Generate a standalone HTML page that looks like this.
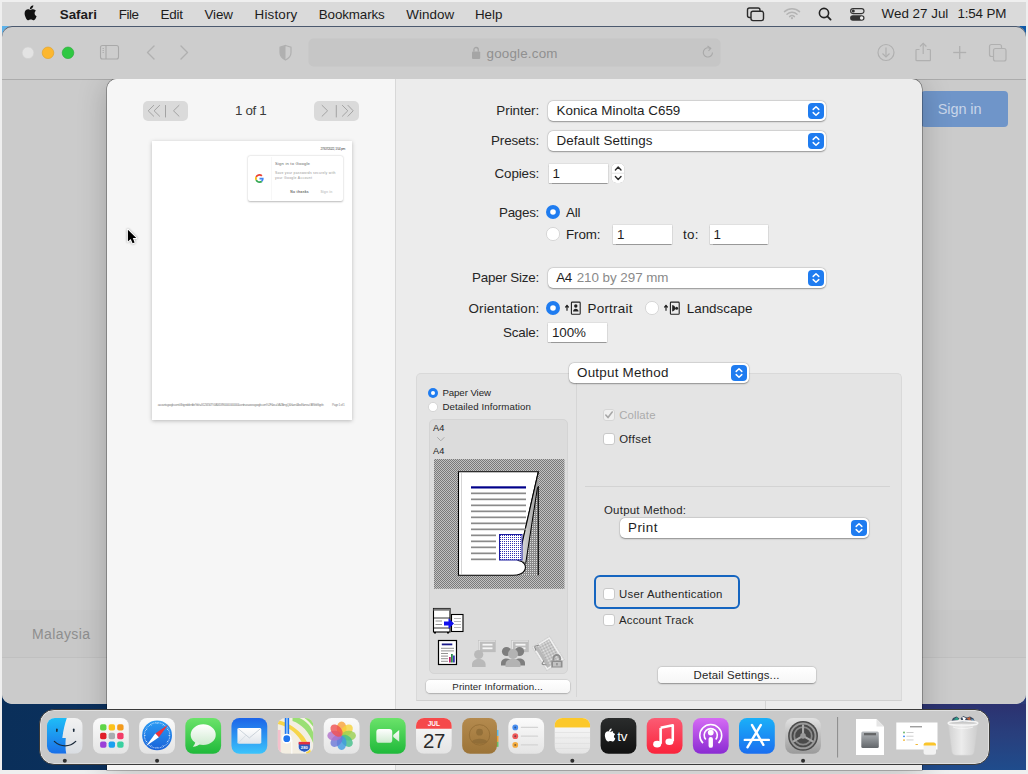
<!DOCTYPE html><html><head><meta charset="utf-8"><style>
html,body{margin:0;padding:0;width:1028px;height:774px;overflow:hidden;background:#efefef;}
body{position:relative;font-family:"Liberation Sans",sans-serif;}
.t{position:absolute;white-space:nowrap;}
.b{position:absolute;box-sizing:border-box;}
svg{position:absolute;overflow:visible;}
</style></head><body>
<div class="b" style="left:2px;top:26px;width:1024px;height:744px;background:linear-gradient(90deg,#0a2f5a 0%,#0d3566 40%,#1f3f7a 75%,#2b3b78 100%);"></div>
<div class="b" style="left:2px;top:26px;width:1024px;height:34px;background:linear-gradient(90deg,#5cb2ea 0%,#3a8fd0 40%,#1a64b0 80%,#0d58a8 100%);"></div>
<div class="b" style="left:922px;top:704px;width:104px;height:66px;background:linear-gradient(180deg,#2c3270 0%,#28407e 50%,#1f4c8c 100%);"></div>
<div class="b" style="left:2px;top:2px;width:1024px;height:24px;background:#dadada;"></div>
<svg style="left:23px;top:5px" width="15" height="16" viewBox="0 0 15 16"><path d="M10.3 0.2c0.1 1-0.3 2-0.9 2.7-0.6 0.7-1.6 1.3-2.5 1.2-0.1-1 0.4-2 0.9-2.6 0.6-0.7 1.7-1.2 2.5-1.3z M13.2 5.5c-0.1 0.1-1.6 0.9-1.6 2.8 0 2.2 1.9 3 2 3-0.1 0.3-0.4 1.2-1 2.1-0.6 0.9-1.3 1.8-2.3 1.8-1 0-1.3-0.6-2.5-0.6-1.2 0-1.5 0.6-2.4 0.6-1 0-1.7-0.9-2.3-1.8C2.2 11.9 1.6 9.7 1.6 8.3c0-2.7 1.8-4.1 3.5-4.1 0.9 0 1.7 0.6 2.3 0.6 0.5 0 1.4-0.6 2.4-0.6 0.4 0 1.8 0 2.7 1.300z" fill="#111"/></svg>
<div class="t" style="left:59.70px;top:8.00px;font-size:13.4px;line-height:13.4px;color:#1c1c1c;font-weight:700;letter-spacing:0.011px;">Safari</div>
<div class="t" style="left:118.80px;top:8.00px;font-size:13.4px;line-height:13.4px;color:#1c1c1c;letter-spacing:-0.464px;">File</div>
<div class="t" style="left:160.60px;top:8.00px;font-size:13.4px;line-height:13.4px;color:#1c1c1c;letter-spacing:-0.230px;">Edit</div>
<div class="t" style="left:204.40px;top:8.00px;font-size:13.4px;line-height:13.4px;color:#1c1c1c;letter-spacing:-0.068px;">View</div>
<div class="t" style="left:254.60px;top:8.00px;font-size:13.4px;line-height:13.4px;color:#1c1c1c;letter-spacing:0.168px;">History</div>
<div class="t" style="left:318.80px;top:8.00px;font-size:13.4px;line-height:13.4px;color:#1c1c1c;letter-spacing:-0.128px;">Bookmarks</div>
<div class="t" style="left:406.30px;top:8.00px;font-size:13.4px;line-height:13.4px;color:#1c1c1c;letter-spacing:0.068px;">Window</div>
<div class="t" style="left:475.00px;top:8.00px;font-size:13.4px;line-height:13.4px;color:#1c1c1c;letter-spacing:-0.053px;">Help</div>
<div class="t" style="left:881.60px;top:7.00px;font-size:13.4px;line-height:13.4px;color:#1c1c1c;letter-spacing:0.001px;">Wed 27 Jul</div>
<div class="t" style="left:957.40px;top:7.00px;font-size:13.4px;line-height:13.4px;color:#1c1c1c;letter-spacing:-0.151px;">1:54 PM</div>
<div class="b" style="left:2px;top:26px;width:1024px;height:678px;background:#cbcbcb;border-radius:10px;overflow:hidden;"></div>
<div class="b" style="left:2px;top:26px;width:1024px;height:54px;background:#cdcdcd;border-radius:10px 10px 0 0;border-bottom:1px solid #acacac;box-shadow:inset 0 1px 0 rgba(20,40,70,0.7);"></div>
<div class="b" style="left:2px;top:610px;width:1024px;height:48px;background:#c8c8c8;border-bottom:1px solid #c0c0c0;"></div>
<div class="b" style="left:2px;top:658px;width:1024px;height:46px;background:#cbcbcb;border-radius:0 0 10px 10px;"></div>
<div class="t" style="left:32.00px;top:627.00px;font-size:14px;line-height:14px;color:#8e8e8e;letter-spacing:0.394px;">Malaysia</div>
<div class="b" style="left:921px;top:91px;width:87px;height:36px;background:#6f95c9;border-radius:4px;"></div>
<div class="t" style="left:937.70px;top:102.00px;font-size:14.5px;line-height:14.5px;color:#c9d6ea;letter-spacing:-0.073px;">Sign in</div>
<div class="b" style="left:107px;top:79px;width:815px;height:691px;background:#ececec;border-radius:10px 10px 0 0;box-shadow:0 0 0 0.6px rgba(0,0,0,0.45),0 4px 30px rgba(0,0,0,0.22);clip-path:inset(0 -60px -60px -60px);"></div>
<div class="b" style="left:107px;top:79px;width:289px;height:691px;background:#f6f6f6;border-radius:10px 0 0 0;border-right:1px solid #d8d8d8;"></div>
<svg style="left:0;top:0" width="1028" height="80"><circle cx="28" cy="52.8" r="5.8" fill="#e3e3e3" stroke="#d2d2d2" stroke-width="0.6"/><circle cx="48" cy="52.8" r="5.8" fill="#fcb72f" stroke="#e0a020" stroke-width="0.6"/><circle cx="68" cy="52.8" r="5.8" fill="#2fc842" stroke="#22a832" stroke-width="0.6"/><rect x="100.5" y="45.5" width="18" height="13.5" rx="2" fill="none" stroke="#a9a9a9" stroke-width="1.1"/><line x1="106" y1="45.5" x2="106" y2="59" stroke="#a9a9a9" stroke-width="1.1"/><line x1="102.5" y1="48.5" x2="104" y2="48.5" stroke="#a9a9a9" stroke-width="0.8"/><line x1="102.5" y1="50.5" x2="104" y2="50.5" stroke="#a9a9a9" stroke-width="0.8"/><line x1="102.5" y1="52.5" x2="104" y2="52.5" stroke="#a9a9a9" stroke-width="0.8"/><polyline points="154,46 147.5,52.5 154,59" fill="none" stroke="#b0b0b0" stroke-width="1.4" stroke-linecap="round" stroke-linejoin="round"/><polyline points="181,46 187.5,52.5 181,59" fill="none" stroke="#b0b0b0" stroke-width="1.4" stroke-linecap="round" stroke-linejoin="round"/><path d="M285.5 45.5 L291 47.3 L291 52.5 C291 56 288.5 58.5 285.5 60 C282.5 58.5 280 56 280 52.5 L280 47.3 Z" fill="none" stroke="#b0b0b0" stroke-width="1.2"/><path d="M285.5 45.5 L285.5 60 C282.5 58.5 280 56 280 52.5 L280 47.3 Z" fill="#b0b0b0"/><rect x="308.5" y="38.5" width="412" height="28" rx="5" fill="#c6c6c6"/><rect x="472" y="51.5" width="8.2" height="7.5" rx="1" fill="#a5a5a5"/><path d="M473.9 51.5 v-1.8 a2.2 2.2 0 0 1 4.4 0 v1.8" fill="none" stroke="#a5a5a5" stroke-width="1.3"/><path d="M712.5 52.5 a4.6 4.6 0 1 1 -2.2 -4" fill="none" stroke="#a9a9a9" stroke-width="1.1"/><polyline points="707.5,46 710.8,48.3 708.5,51" fill="none" stroke="#a9a9a9" stroke-width="1.1"/><circle cx="886" cy="52.5" r="8" fill="none" stroke="#b0b0b0" stroke-width="1.2"/><line x1="886" y1="47.5" x2="886" y2="57" stroke="#b0b0b0" stroke-width="1.2"/><polyline points="882.5,53.5 886,57 889.5,53.5" fill="none" stroke="#b0b0b0" stroke-width="1.2"/><path d="M919.5 49.5 h-2.7 a0.8 0.8 0 0 0 -0.8 0.8 v9.6 a0.8 0.8 0 0 0 0.8 0.8 h12.8 a0.8 0.8 0 0 0 0.8 -0.8 v-9.6 a0.8 0.8 0 0 0 -0.8 -0.8 h-2.7" fill="none" stroke="#b0b0b0" stroke-width="1.2"/><line x1="923.2" y1="43.5" x2="923.2" y2="54" stroke="#b0b0b0" stroke-width="1.2"/><polyline points="920,46.5 923.2,43.3 926.4,46.5" fill="none" stroke="#b0b0b0" stroke-width="1.2"/><line x1="953.2" y1="52.5" x2="966.2" y2="52.5" stroke="#b0b0b0" stroke-width="1.3"/><line x1="959.7" y1="46" x2="959.7" y2="59" stroke="#b0b0b0" stroke-width="1.3"/><rect x="989.5" y="44.5" width="12" height="12" rx="2" fill="none" stroke="#b0b0b0" stroke-width="1.2"/><rect x="993.5" y="48.5" width="12.5" height="12.5" rx="2" fill="#cbcbcb" stroke="#b0b0b0" stroke-width="1.2"/></svg>
<div class="t" style="left:486.50px;top:47.00px;font-size:13.4px;line-height:13.4px;color:#909090;letter-spacing:0.191px;">google.com</div>
<div class="b" style="left:143.4px;top:101px;width:44.29999999999998px;height:20px;background:#dadada;border-radius:5px;"></div>
<div class="b" style="left:314.3px;top:101px;width:44.5px;height:20px;background:#dadada;border-radius:5px;"></div>
<svg style="left:0;top:0" width="400" height="130"><g fill="none" stroke="#a0a0a0" stroke-width="0.95" stroke-linecap="round" stroke-linejoin="miter"><polyline points="153.7,105.4 148.2,110.8 153.7,116.2"/><polyline points="159.6,105.4 154.1,110.8 159.6,116.2"/><line x1="165.5" y1="105.5" x2="165.5" y2="117"/><polyline points="179,105.4 173.5,110.8 179,116.2"/><polyline points="322.1,105.4 327.6,110.8 322.1,116.2"/><line x1="336.3" y1="105.5" x2="336.3" y2="117"/><polyline points="342.4,105.4 347.8,110.8 342.4,116.2"/><polyline points="348,105.4 353.2,110.8 348,116.2"/></g></svg>
<div class="t" style="left:235.00px;top:104.00px;font-size:13.4px;line-height:13.4px;color:#3a3a3a;letter-spacing:-0.365px;">1 of 1</div>
<div class="b" style="left:152px;top:141px;width:200px;height:279px;background:#ffffff;box-shadow:0 1px 4px rgba(0,0,0,0.25);"></div>
<div class="t" style="left:320.60px;top:148.00px;font-size:3.4px;line-height:3.4px;color:#444;letter-spacing:-0.355px;">27/07/2022, 1:54 pm</div>
<div class="b" style="left:248px;top:156px;width:95px;height:45px;background:#fff;border-radius:2px;box-shadow:0 0.5px 2px rgba(0,0,0,0.28);"></div>
<div class="b" style="left:271px;top:157px;width:1px;height:43px;background:#f7f7f7;"></div>
<svg style="left:255px;top:173.5px" width="9" height="9" viewBox="0 0 48 48"><path fill="#EA4335" d="M24 9.5c3.5 0 6.6 1.2 9.1 3.6l6.8-6.8C35.8 2.4 30.3 0 24 0 14.6 0 6.6 5.4 2.6 13.3l7.9 6.1C12.4 13.7 17.7 9.5 24 9.5z"/><path fill="#4285F4" d="M46.1 24.5c0-1.6-.1-3.1-.4-4.5H24v9h12.4c-.5 2.9-2.2 5.3-4.6 6.9l7.5 5.8c4.4-4 6.8-10 6.800-17.200z"/><path fill="#FBBC05" d="M10.5 28.6c-.5-1.4-.8-3-.8-4.6s.3-3.2.8-4.6l-7.9-6.1C1 16.500 0 20.100 0 24s1 7.500 2.600 10.700l7.900-6.100z"/><path fill="#34A853" d="M24 48c6.5 0 11.900-2.100 15.900-5.800l-7.500-5.800c-2.100 1.400-4.800 2.300-8.400 2.300-6.300 0-11.600-4.200-13.500-10l-7.900 6.100C6.600 42.600 14.600 48 24 48z"/></svg>
<div class="t" style="left:275.00px;top:162.00px;font-size:4.2px;line-height:4.2px;color:#6a6a6a;letter-spacing:0.174px;">Sign in to Google</div>
<div class="t" style="left:275.00px;top:172.00px;font-size:3.4px;line-height:3.4px;color:#999;letter-spacing:0.234px;">Save your passwords securely with</div>
<div class="t" style="left:275.00px;top:177.00px;font-size:3.4px;line-height:3.4px;color:#999;letter-spacing:0.302px;">your Google Account</div>
<div class="t" style="left:290.30px;top:191.00px;font-size:3.4px;line-height:3.4px;color:#6a6a6a;font-weight:700;letter-spacing:0.258px;">No thanks</div>
<div class="t" style="left:320.40px;top:191.00px;font-size:3.4px;line-height:3.4px;color:#c8c8c8;font-weight:700;letter-spacing:0.111px;">Sign in</div>
<div class="t" style="left:157.70px;top:404.00px;font-size:3.2px;line-height:3.2px;color:#8a8a8a;letter-spacing:-0.486px;">accounts.google.com/v3/signin/identifier?dsh=S1234567%3A1658900000000000&amp;continue=www.google.com%2F&amp;ec=GAZAmgQ&amp;hl=en&amp;flowName=GlifWebSignIn</div>
<div class="t" style="left:332.00px;top:404.00px;font-size:3.2px;line-height:3.2px;color:#8a8a8a;letter-spacing:-0.357px;">Page 1 of 1</div>
<div class="t" style="left:496.30px;top:104.00px;font-size:13.4px;line-height:13.4px;color:#262626;letter-spacing:-0.027px;">Printer:</div>
<div class="b" style="left:548px;top:101px;width:278px;height:20px;background:#fff;border-radius:5px;box-shadow:0 0.5px 1.5px rgba(0,0,0,0.35),0 0 0 0.5px rgba(0,0,0,0.08);"></div>
<svg style="left:808px;top:103.0px" width="16" height="16" viewBox="0 0 16 16"><rect x="0" y="0" width="16" height="16" rx="4" fill="#1f7cf0"/><polyline points="5.2,6.4 8,3.8 10.8,6.4" fill="none" stroke="#fff" stroke-width="1.5" stroke-linecap="round" stroke-linejoin="round"/><polyline points="5.2,9.6 8,12.2 10.8,9.6" fill="none" stroke="#fff" stroke-width="1.5" stroke-linecap="round" stroke-linejoin="round"/></svg>
<div class="t" style="left:556.50px;top:104.00px;font-size:13.4px;line-height:13.4px;color:#1e1e1e;letter-spacing:0.014px;">Konica Minolta C659</div>
<div class="t" style="left:491.00px;top:134.00px;font-size:13.4px;line-height:13.4px;color:#262626;letter-spacing:-0.122px;">Presets:</div>
<div class="b" style="left:548px;top:131px;width:278px;height:20px;background:#fff;border-radius:5px;box-shadow:0 0.5px 1.5px rgba(0,0,0,0.35),0 0 0 0.5px rgba(0,0,0,0.08);"></div>
<svg style="left:808px;top:133.0px" width="16" height="16" viewBox="0 0 16 16"><rect x="0" y="0" width="16" height="16" rx="4" fill="#1f7cf0"/><polyline points="5.2,6.4 8,3.8 10.8,6.4" fill="none" stroke="#fff" stroke-width="1.5" stroke-linecap="round" stroke-linejoin="round"/><polyline points="5.2,9.6 8,12.2 10.8,9.6" fill="none" stroke="#fff" stroke-width="1.5" stroke-linecap="round" stroke-linejoin="round"/></svg>
<div class="t" style="left:556.50px;top:134.00px;font-size:13.4px;line-height:13.4px;color:#1e1e1e;letter-spacing:0.093px;">Default Settings</div>
<div class="t" style="left:494.50px;top:167.00px;font-size:13.4px;line-height:13.4px;color:#262626;letter-spacing:-0.106px;">Copies:</div>
<div class="b" style="left:548.5px;top:163.5px;width:59.0px;height:19.5px;background:#fff;box-shadow:0 0.6px 1px rgba(0,0,0,0.32),0 0 0 0.5px rgba(0,0,0,0.10);"></div>
<div class="t" style="left:552.50px;top:167.00px;font-size:13.4px;line-height:13.4px;color:#1e1e1e;">1</div>
<svg style="left:610.5px;top:163px" width="14" height="21" viewBox="0 0 14 21"><rect x="0.5" y="0.5" width="13" height="19.5" rx="5" fill="#fff" style="filter:drop-shadow(0 0.5px 0.6px rgba(0,0,0,0.35))"/><line x1="1" y1="10.2" x2="13" y2="10.2" stroke="#e4e4e4" stroke-width="1"/><polyline points="4.4,6.9 7.2,4.1 10,6.9" fill="none" stroke="#2a2a2a" stroke-width="1.4" stroke-linecap="round" stroke-linejoin="round"/><polyline points="4.4,13.6 7.2,16.4 10,13.6" fill="none" stroke="#2a2a2a" stroke-width="1.4" stroke-linecap="round" stroke-linejoin="round"/></svg>
<div class="t" style="left:499.00px;top:206.00px;font-size:13.4px;line-height:13.4px;color:#262626;letter-spacing:-0.284px;">Pages:</div>
<svg style="left:545.6px;top:205.0px" width="14" height="14"><circle cx="7.0" cy="7.0" r="7.0" fill="#1f7cf0"/><circle cx="7.0" cy="7.0" r="2.8000000000000003" fill="#fff"/></svg>
<div class="t" style="left:566.00px;top:206.00px;font-size:13.4px;line-height:13.4px;color:#1e1e1e;letter-spacing:-0.196px;">All</div>
<svg style="left:545.6px;top:227.0px" width="14" height="14"><circle cx="7.0" cy="7.0" r="6.6" fill="#fff" stroke="#cfcfcf" stroke-width="0.8"/></svg>
<div class="t" style="left:566.00px;top:228.00px;font-size:13.4px;line-height:13.4px;color:#1e1e1e;letter-spacing:-0.122px;">From:</div>
<div class="b" style="left:613.3px;top:224.6px;width:59.200000000000045px;height:19.200000000000017px;background:#fff;box-shadow:0 0.6px 1px rgba(0,0,0,0.32),0 0 0 0.5px rgba(0,0,0,0.10);"></div>
<div class="t" style="left:617.00px;top:228.00px;font-size:13.4px;line-height:13.4px;color:#1e1e1e;">1</div>
<div class="t" style="left:683.00px;top:228.00px;font-size:13.4px;line-height:13.4px;color:#1e1e1e;letter-spacing:0.301px;">to:</div>
<div class="b" style="left:709.5px;top:224.6px;width:58.89999999999998px;height:19.200000000000017px;background:#fff;box-shadow:0 0.6px 1px rgba(0,0,0,0.32),0 0 0 0.5px rgba(0,0,0,0.10);"></div>
<div class="t" style="left:713.50px;top:228.00px;font-size:13.4px;line-height:13.4px;color:#1e1e1e;">1</div>
<div class="t" style="left:472.00px;top:271.00px;font-size:13.4px;line-height:13.4px;color:#262626;letter-spacing:-0.197px;">Paper Size:</div>
<div class="b" style="left:548px;top:268px;width:278px;height:20px;background:#fff;border-radius:5px;box-shadow:0 0.5px 1.5px rgba(0,0,0,0.35),0 0 0 0.5px rgba(0,0,0,0.08);"></div>
<svg style="left:808px;top:270.0px" width="16" height="16" viewBox="0 0 16 16"><rect x="0" y="0" width="16" height="16" rx="4" fill="#1f7cf0"/><polyline points="5.2,6.4 8,3.8 10.8,6.4" fill="none" stroke="#fff" stroke-width="1.5" stroke-linecap="round" stroke-linejoin="round"/><polyline points="5.2,9.6 8,12.2 10.8,9.6" fill="none" stroke="#fff" stroke-width="1.5" stroke-linecap="round" stroke-linejoin="round"/></svg>
<div class="t" style="left:556.30px;top:271.00px;font-size:13.4px;line-height:13.4px;color:#1e1e1e;letter-spacing:-0.391px;">A4</div>
<div class="t" style="left:576.70px;top:271.00px;font-size:13.4px;line-height:13.4px;color:#8a8a8a;letter-spacing:-0.039px;">210 by 297 mm</div>
<div class="t" style="left:468.50px;top:302.00px;font-size:13.4px;line-height:13.4px;color:#262626;letter-spacing:0.139px;">Orientation:</div>
<svg style="left:545.8px;top:301.0px" width="14" height="14"><circle cx="7.0" cy="7.0" r="7.0" fill="#1f7cf0"/><circle cx="7.0" cy="7.0" r="2.8000000000000003" fill="#fff"/></svg>
<svg style="left:644.7px;top:301.0px" width="14" height="14"><circle cx="7.0" cy="7.0" r="6.6" fill="#fff" stroke="#cfcfcf" stroke-width="0.8"/></svg>
<div class="t" style="left:587.50px;top:302.00px;font-size:13.4px;line-height:13.4px;color:#1e1e1e;letter-spacing:0.258px;">Portrait</div>
<div class="t" style="left:686.70px;top:302.00px;font-size:13.4px;line-height:13.4px;color:#1e1e1e;letter-spacing:0.029px;">Landscape</div>
<div class="t" style="left:503.00px;top:326.00px;font-size:13.4px;line-height:13.4px;color:#262626;letter-spacing:-0.189px;">Scale:</div>
<div class="b" style="left:548.4px;top:322.7px;width:59.0px;height:19.600000000000023px;background:#fff;box-shadow:0 0.6px 1px rgba(0,0,0,0.32),0 0 0 0.5px rgba(0,0,0,0.10);"></div>
<div class="t" style="left:552.00px;top:326.00px;font-size:13.4px;line-height:13.4px;color:#1e1e1e;letter-spacing:-0.091px;">100%</div>
<svg style="left:0;top:0" width="700" height="330"><g stroke="#222" fill="none"><line x1="567" y1="310.8" x2="567" y2="305.6" stroke-width="1.2"/><polyline points="565.3,307.3 567,305.4 568.7,307.3" stroke-width="1.1" fill="#222"/><rect x="571.4" y="302.1" width="8.8" height="12.1" rx="0.8" stroke-width="1.1"/><circle cx="575.8" cy="306" r="1.7" fill="#222" stroke="none"/><path d="M573 311.6 c0.3-2 1.3-2.8 2.8-2.8 s2.5 0.8 2.8 2.8 z" fill="#222" stroke="none"/><line x1="666" y1="310.8" x2="666" y2="305.6" stroke-width="1.2"/><polyline points="664.3,307.3 666,305.4 667.7,307.3" stroke-width="1.1" fill="#222"/><rect x="670.4" y="302.1" width="8.8" height="12.1" rx="0.8" stroke-width="1.1"/><circle cx="676.6" cy="308.2" r="1.5" fill="#222" stroke="none"/><path d="M672.2 305 c2.1 0.3 2.900 1.500 2.900 3.200 s-0.800 2.900-2.900 3.200 z" fill="#222" stroke="none"/></g></svg>
<div class="b" style="left:416px;top:373px;width:486px;height:327.79999999999995px;background:#e4e4e4;border:1px solid #d9d9d9;border-bottom-color:#d0d0d0;border-radius:5px 5px 0 0;"></div>
<div class="b" style="left:576px;top:383px;width:1px;height:314px;background:#d6d6d6;"></div>
<div class="b" style="left:764.5px;top:701px;width:1.0px;height:9px;background:#d4d4d4;"></div>
<div class="b" style="left:568.5px;top:362.5px;width:180.20000000000005px;height:20.5px;background:#fff;border-radius:5px;box-shadow:0 0.5px 1.5px rgba(0,0,0,0.35),0 0 0 0.5px rgba(0,0,0,0.08);"></div>
<svg style="left:730.7px;top:364.75px" width="16" height="16" viewBox="0 0 16 16"><rect x="0" y="0" width="16" height="16" rx="4" fill="#1f7cf0"/><polyline points="5.2,6.4 8,3.8 10.8,6.4" fill="none" stroke="#fff" stroke-width="1.5" stroke-linecap="round" stroke-linejoin="round"/><polyline points="5.2,9.6 8,12.2 10.8,9.6" fill="none" stroke="#fff" stroke-width="1.5" stroke-linecap="round" stroke-linejoin="round"/></svg>
<div class="t" style="left:577.00px;top:366.00px;font-size:13.4px;line-height:13.4px;color:#1e1e1e;letter-spacing:0.238px;">Output Method</div>
<svg style="left:427.8px;top:387.7px" width="10" height="10"><circle cx="5.0" cy="5.0" r="5.0" fill="#1f7cf0"/><circle cx="5.0" cy="5.0" r="2.0" fill="#fff"/></svg>
<div class="t" style="left:442.40px;top:388.00px;font-size:9.7px;line-height:9.7px;color:#262626;letter-spacing:-0.092px;">Paper View</div>
<svg style="left:427.8px;top:402.0px" width="10" height="10"><circle cx="5.0" cy="5.0" r="4.6" fill="#fff" stroke="#cfcfcf" stroke-width="0.8"/></svg>
<div class="t" style="left:442.40px;top:402.00px;font-size:9.7px;line-height:9.7px;color:#262626;letter-spacing:0.094px;">Detailed Information</div>
<div class="b" style="left:428.5px;top:419px;width:139.5px;height:255px;background:#dcdcdc;border-radius:5px;border:1px solid #d4d4d4;"></div>
<div class="t" style="left:433.00px;top:424.00px;font-size:9.2px;line-height:9.2px;color:#222;letter-spacing:0.147px;">A4</div>
<svg style="left:434px;top:436px" width="12" height="6"><polyline points="3.3,1.3 6.8,4.8 10.3,1.3" fill="none" stroke="#a9a9a9" stroke-width="1"/></svg>
<div class="t" style="left:433.00px;top:447.00px;font-size:9.2px;line-height:9.2px;color:#222;letter-spacing:0.147px;">A4</div>
<svg style="left:0;top:0" width="600" height="600"><defs><pattern id="hatch" x="434" y="459" width="2" height="2" patternUnits="userSpaceOnUse"><rect width="2" height="2" fill="#7a7a7a"/><rect x="0" y="0" width="1" height="1" fill="#c2c2c2"/><rect x="1" y="1" width="1" height="1" fill="#c2c2c2"/></pattern><pattern id="dots" x="499" y="534" width="2" height="2" patternUnits="userSpaceOnUse"><rect width="2" height="2" fill="#fff"/><rect x="1" y="1" width="1" height="1" fill="#3030b0"/></pattern><pattern id="dots2" width="2" height="2" patternUnits="userSpaceOnUse"><rect width="2" height="2" fill="#8a8a8a"/><rect x="0" y="0" width="1" height="1" fill="#dadada"/></pattern><linearGradient id="curl" x1="0" y1="0" x2="1" y2="0"><stop offset="0" stop-color="#e6e6e6"/><stop offset="1" stop-color="#9a9a9a"/></linearGradient></defs><rect x="434" y="459" width="130.5" height="129.8" fill="url(#hatch)"/><path d="M537.5 480 L538.3 480 L538.3 575.2 L520 575.2 L525.7 563 Z" fill="url(#dots2)"/><line x1="538.3" y1="486" x2="538.3" y2="575.2" stroke="#000" stroke-width="1.1"/><path d="M458.5 471.8 L538.3 471.8 L518.2 560.5 C524 561 527 566 524.5 570.5 C522.5 574 519 575.2 513 575.2 L458.5 575.2 Z" fill="#fff" stroke="#000" stroke-width="1.1"/><line x1="461.5" y1="473.5" x2="461.5" y2="574" stroke="#a0a0a0" stroke-width="0.9" stroke-dasharray="1 1"/><path d="M538.3 471.8 L537.5 487.3 L525.7 563 C524 561 521 560.5 518.2 560.5 Z" fill="url(#curl)"/><line x1="538.3" y1="471.8" x2="518.2" y2="560.5" stroke="#000" stroke-width="1.1"/><line x1="537.5" y1="487.3" x2="525.7" y2="563.5" stroke="#000" stroke-width="1"/><rect x="471" y="486.3" width="55" height="2.2" fill="#00008a"/><rect x="471" y="492.5" width="55" height="1.7" fill="#8a8a8a"/><rect x="471" y="498.5" width="55" height="1.7" fill="#8a8a8a"/><rect x="471" y="504.5" width="55" height="1.7" fill="#8a8a8a"/><rect x="471" y="510.5" width="55" height="1.7" fill="#8a8a8a"/><rect x="471" y="516.5" width="55" height="1.7" fill="#8a8a8a"/><rect x="471" y="522.5" width="55" height="1.7" fill="#8a8a8a"/><rect x="471" y="528.5" width="55" height="1.7" fill="#8a8a8a"/><rect x="471" y="534.5" width="25" height="1.7" fill="#8a8a8a"/><rect x="471" y="540.5" width="25" height="1.7" fill="#8a8a8a"/><rect x="471" y="546.5" width="25" height="1.7" fill="#8a8a8a"/><rect x="471" y="552.5" width="25" height="1.7" fill="#8a8a8a"/><rect x="471" y="558.5" width="25" height="1.7" fill="#8a8a8a"/><rect x="499.5" y="534.5" width="22.5" height="25.5" fill="url(#dots)" stroke="#1a1aa0" stroke-width="1"/></svg>
<svg style="left:0;top:0" width="600" height="700"><rect x="433.5" y="608.5" width="16.5" height="23.5" fill="#fff" stroke="#000" stroke-width="1.1"/><rect x="433.5" y="608.5" width="16.5" height="2.2" fill="#7a7a7a"/><line x1="433.5" y1="618" x2="450" y2="618" stroke="#000" stroke-width="0.8"/><line x1="435.5" y1="621" x2="442" y2="621" stroke="#777" stroke-width="0.8"/><line x1="435.5" y1="624.5" x2="442" y2="624.5" stroke="#777" stroke-width="0.8"/><line x1="433.5" y1="628" x2="450" y2="628" stroke="#000" stroke-width="0.8"/><rect x="434" y="632" width="2" height="1.5" fill="#000"/><rect x="447" y="632" width="2" height="1.5" fill="#000"/><rect x="451.5" y="614.5" width="11.5" height="17" fill="#fff" stroke="#000" stroke-width="1.1"/><line x1="454" y1="618.5" x2="461" y2="618.5" stroke="#999" stroke-width="0.7"/><line x1="454" y1="621.5" x2="461" y2="621.5" stroke="#999" stroke-width="0.7"/><line x1="454" y1="624.5" x2="461" y2="624.5" stroke="#999" stroke-width="0.7"/><line x1="454" y1="627.5" x2="461" y2="627.5" stroke="#999" stroke-width="0.7"/><path d="M444 621.5 h4.5 v-3.2 l5.5 5.2 -5.5 5.2 v-3.2 h-4.5 z" fill="#1010ee"/><rect x="438.5" y="640.5" width="18" height="24" fill="#fff" stroke="#000" stroke-width="1.2"/><rect x="441.8" y="643.5" width="10.5" height="1.8" fill="#1a1a8a"/><line x1="441" y1="648.3" x2="454" y2="648.3" stroke="#777" stroke-width="0.8"/><line x1="441" y1="650.9" x2="454" y2="650.9" stroke="#777" stroke-width="0.8"/><line x1="441" y1="653.5" x2="448" y2="653.5" stroke="#777" stroke-width="0.8"/><line x1="441" y1="656.0999999999999" x2="448" y2="656.0999999999999" stroke="#777" stroke-width="0.8"/><line x1="441" y1="658.6999999999999" x2="448" y2="658.6999999999999" stroke="#777" stroke-width="0.8"/><line x1="441" y1="661.3" x2="448" y2="661.3" stroke="#777" stroke-width="0.8"/><rect x="449" y="657" width="1.8" height="5.5" fill="#c0246a"/><rect x="451" y="654" width="1.8" height="8.5" fill="#2a8a4a"/><rect x="453" y="655.5" width="1.8" height="7" fill="#3a3ab8"/><rect x="478.2" y="640.1" width="17.5" height="12" fill="#bdbdbd"/><path d="M479.2 651 V641.1 H495" fill="none" stroke="#f4f4f4" stroke-width="0.9"/><rect x="482.5" y="643.8" width="10" height="1.8" fill="#f6f6f6"/><rect x="482.5" y="647.4" width="10" height="1.8" fill="#f6f6f6"/><circle cx="478.7" cy="654.5" r="4.6" fill="#b9b9b9"/><path d="M472 667 v-2.5 c0-3.5 3-5.5 6.8-5.5 s6.800 2 6.800 5.500 v2.500 z" fill="#b9b9b9"/><rect x="511.3" y="640.1" width="17.5" height="12" fill="#bdbdbd"/><path d="M512.3 651 V641.1 H528" fill="none" stroke="#f4f4f4" stroke-width="0.9"/><rect x="515.5" y="643.8" width="10" height="1.8" fill="#f6f6f6"/><rect x="515.5" y="647.4" width="10" height="1.8" fill="#f6f6f6"/><circle cx="506.5" cy="651.5" r="4.6" fill="#7e7e7e"/><circle cx="519.5" cy="651.5" r="4.6" fill="#7e7e7e"/><path d="M501 665.5 v-2 c0-3.2 2.5-5 5.5-5 s5.5 1.8 5.5 5 v2 z" fill="#7e7e7e"/><path d="M514 665.5 v-2 c0-3.2 2.5-5 5.5-5 s5.5 1.8 5.5 5 v2 z" fill="#7e7e7e"/><circle cx="513" cy="654" r="5" fill="#b3b3b3"/><path d="M505.5 667 v-2.5 c0-3.5 3.2-5.5 7.5-5.5 s7.500 2 7.500 5.500 v2.500 z" fill="#b3b3b3"/><defs><pattern id="chk" width="2" height="2" patternUnits="userSpaceOnUse"><rect width="2" height="2" fill="#e6e6e6"/><rect width="1" height="1" fill="#a8a8a8"/><rect x="1" y="1" width="1" height="1" fill="#a8a8a8"/></pattern></defs><g transform="rotate(-32 548 653)"><rect x="539" y="641" width="18" height="25" fill="url(#chk)" stroke="#f2f2f2" stroke-width="1.3"/><rect x="540" y="642" width="3" height="23" fill="#b8b8b8"/><rect x="537.5" y="639.5" width="21" height="28" fill="none" stroke="#c4c4c4" stroke-width="0.6" stroke-dasharray="1 1"/></g><path d="M534.5 646.5 l4.5 -1.5 M534.5 646.5 l1.6 4.2" stroke="#8a8a8a" stroke-width="1.1" fill="none"/><path d="M546.5 665 l-4.6 -0.8 M541.9 664.2 l2 -3.800" stroke="#8a8a8a" stroke-width="1.1" fill="none"/><path d="M553.5 660.5 v-2.200 a3.300 3.300 0 0 1 6.600 0 v2.200" fill="none" stroke="#8e8e8e" stroke-width="1.8"/><rect x="551.3" y="660.5" width="11.2" height="7" fill="#8e8e8e"/><rect x="553" y="662" width="7.8" height="4.500" fill="#c2c2c2"/><rect x="556.2" y="663" width="1.500" height="2.400" fill="#8e8e8e"/></svg>
<div class="b" style="left:426px;top:680.2px;width:144.39999999999998px;height:13.0px;background:linear-gradient(#ffffff,#f6f6f6);border-radius:4px;box-shadow:0 0.5px 1.5px rgba(0,0,0,0.35),0 0 0 0.5px rgba(0,0,0,0.08);"></div>
<div class="t" style="left:452.30px;top:682.00px;font-size:9.7px;line-height:9.7px;color:#262626;letter-spacing:0.125px;">Printer Information...</div>
<svg style="left:603px;top:408.7px" width="12" height="12"><rect x="0.5" y="0.5" width="11" height="11" rx="2.5" fill="#f0f0f0" stroke="#d4d4d4" stroke-width="0.9"/><polyline points="2.8,6 5,8.6 9.2,3" fill="none" stroke="#a8a8a8" stroke-width="1.6" stroke-linecap="round" stroke-linejoin="round"/></svg>
<div class="t" style="left:619.20px;top:410.00px;font-size:11.4px;line-height:11.4px;color:#ababab;letter-spacing:0.136px;">Collate</div>
<svg style="left:603px;top:433px" width="12" height="12"><rect x="0.5" y="0.5" width="11" height="11" rx="2.5" fill="#fff" stroke="#c4c4c4" stroke-width="0.9"/></svg>
<div class="t" style="left:619.20px;top:434.00px;font-size:11.4px;line-height:11.4px;color:#262626;letter-spacing:0.319px;">Offset</div>
<div class="b" style="left:585px;top:486px;width:305px;height:1px;background:#d3d3d3;"></div>
<div class="t" style="left:604.00px;top:505.00px;font-size:11.4px;line-height:11.4px;color:#262626;letter-spacing:0.263px;">Output Method:</div>
<div class="b" style="left:619.5px;top:518px;width:249.5px;height:20px;background:#fff;border-radius:5px;box-shadow:0 0.5px 1.5px rgba(0,0,0,0.35),0 0 0 0.5px rgba(0,0,0,0.08);"></div>
<svg style="left:851px;top:520.0px" width="16" height="16" viewBox="0 0 16 16"><rect x="0" y="0" width="16" height="16" rx="4" fill="#1f7cf0"/><polyline points="5.2,6.4 8,3.8 10.8,6.4" fill="none" stroke="#fff" stroke-width="1.5" stroke-linecap="round" stroke-linejoin="round"/><polyline points="5.2,9.6 8,12.2 10.8,9.6" fill="none" stroke="#fff" stroke-width="1.5" stroke-linecap="round" stroke-linejoin="round"/></svg>
<div class="t" style="left:628.00px;top:521.00px;font-size:13.4px;line-height:13.4px;color:#1e1e1e;letter-spacing:0.487px;">Print</div>
<div class="b" style="left:594.2px;top:575.4px;width:145.5px;height:34.0px;border:2px solid #1565c0;border-radius:6px;"></div>
<svg style="left:603px;top:588.3px" width="12" height="12"><rect x="0.5" y="0.5" width="11" height="11" rx="2.5" fill="#fff" stroke="#c4c4c4" stroke-width="0.9"/></svg>
<div class="t" style="left:619.00px;top:589.00px;font-size:11.4px;line-height:11.4px;color:#262626;letter-spacing:0.258px;">User Authentication</div>
<svg style="left:603px;top:614.4px" width="12" height="12"><rect x="0.5" y="0.5" width="11" height="11" rx="2.5" fill="#fff" stroke="#c4c4c4" stroke-width="0.9"/></svg>
<div class="t" style="left:619.00px;top:615.00px;font-size:11.4px;line-height:11.4px;color:#262626;letter-spacing:0.189px;">Account Track</div>
<div class="b" style="left:657.7px;top:666.6px;width:158.39999999999998px;height:16.600000000000023px;background:linear-gradient(#ffffff,#f6f6f6);border-radius:4px;box-shadow:0 0.5px 1.5px rgba(0,0,0,0.35),0 0 0 0.5px rgba(0,0,0,0.08);"></div>
<div class="t" style="left:693.50px;top:670.00px;font-size:11.4px;line-height:11.4px;color:#262626;letter-spacing:0.176px;">Detail Settings...</div>
<div class="b" style="left:38.5px;top:708.6px;width:951.0px;height:56.60000000000002px;background:#c9c9c9;border-radius:15px;border:1px solid #3a3a3a;box-shadow:inset 0 0 0 0.8px rgba(255,255,255,0.55);"></div>
<svg style="left:0;top:0" width="1028" height="774"><defs><linearGradient id="gFinderL" x1="0" y1="0" x2="0" y2="1"><stop offset="0" stop-color="#1fbdf7"/><stop offset="1" stop-color="#1a6fe8"/></linearGradient><linearGradient id="gFinderR" x1="0" y1="0" x2="0" y2="1"><stop offset="0" stop-color="#f2f2f2"/><stop offset="1" stop-color="#d9dde2"/></linearGradient><linearGradient id="gWhite" x1="0" y1="0" x2="0" y2="1"><stop offset="0" stop-color="#fbfbfb"/><stop offset="1" stop-color="#e4e4e4"/></linearGradient><linearGradient id="gGreen" x1="0" y1="0" x2="0" y2="1"><stop offset="0" stop-color="#6be36a"/><stop offset="1" stop-color="#1fb93a"/></linearGradient><linearGradient id="gMail" x1="0" y1="0" x2="0" y2="1"><stop offset="0" stop-color="#1c64e8"/><stop offset="1" stop-color="#3cc4fb"/></linearGradient><linearGradient id="gEnv" x1="0" y1="0" x2="0" y2="1"><stop offset="0" stop-color="#ffffff"/><stop offset="1" stop-color="#dfe4ea"/></linearGradient><linearGradient id="gBub" x1="0" y1="0" x2="0" y2="1"><stop offset="0" stop-color="#ffffff"/><stop offset="1" stop-color="#cfead0"/></linearGradient><linearGradient id="gContacts" x1="0" y1="0" x2="0" y2="1"><stop offset="0" stop-color="#b48a4e"/><stop offset="1" stop-color="#9c7438"/></linearGradient><linearGradient id="gMusic" x1="0" y1="0" x2="0" y2="1"><stop offset="0" stop-color="#fb5c74"/><stop offset="1" stop-color="#fa233b"/></linearGradient><linearGradient id="gPod" x1="0" y1="0" x2="0" y2="1"><stop offset="0" stop-color="#d56bf4"/><stop offset="1" stop-color="#8a2bd2"/></linearGradient><linearGradient id="gApp" x1="0" y1="0" x2="0" y2="1"><stop offset="0" stop-color="#1ab0f8"/><stop offset="1" stop-color="#1a6ef0"/></linearGradient><linearGradient id="gSys" x1="0" y1="0" x2="0" y2="1"><stop offset="0" stop-color="#e2e2e2"/><stop offset="1" stop-color="#9a9a9a"/></linearGradient><linearGradient id="gTV" x1="0" y1="0" x2="0" y2="1"><stop offset="0" stop-color="#2a2c2c"/><stop offset="1" stop-color="#111"/></linearGradient><linearGradient id="gSafari" x1="0" y1="0" x2="0" y2="1"><stop offset="0" stop-color="#2a9cf4"/><stop offset="1" stop-color="#1a62d8"/></linearGradient><linearGradient id="gDisk" x1="0" y1="0" x2="0" y2="1"><stop offset="0" stop-color="#b4b8bc"/><stop offset="1" stop-color="#62666a"/></linearGradient><linearGradient id="gTrash" x1="0" y1="0" x2="1" y2="0"><stop offset="0" stop-color="#d2d2d2"/><stop offset="0.45" stop-color="#ececec"/><stop offset="1" stop-color="#cdcdcd"/></linearGradient></defs><g transform="translate(46.90,718) scale(0.9944)"><clipPath id="cF"><rect width="36" height="36" rx="8"/></clipPath><g clip-path="url(#cF)"><rect width="36" height="36" fill="url(#gFinderR)"/><path d="M0 0 H20 C18 6 16.5 12 15.5 20 H19 C18.5 26 18.5 31 19.5 36 H0 Z" fill="url(#gFinderL)"/></g><rect x="9.2" y="10.5" width="1.6" height="3.6" rx="0.8" fill="#1a2a3a"/><rect x="26.2" y="10.5" width="1.6" height="3.6" rx="0.8" fill="#1a2a3a"/><path d="M7.5 23.5 C14 29.5 23 29.5 29 23.5" fill="none" stroke="#1a2a3a" stroke-width="1.3" stroke-linecap="round"/></g><g transform="translate(93.04,718) scale(0.9944)"><rect width="36" height="36" rx="8" fill="url(#gWhite)"/><rect x="7.10" y="6.20" width="6.4" height="6.4" rx="1.8" fill="#5fd548"/><rect x="15.70" y="6.20" width="6.4" height="6.4" rx="1.8" fill="#fcc21b"/><rect x="24.30" y="6.20" width="6.4" height="6.4" rx="1.8" fill="#f39a1c"/><rect x="7.10" y="14.90" width="6.4" height="6.4" rx="1.8" fill="#e01e2a"/><rect x="15.70" y="14.90" width="6.4" height="6.4" rx="1.8" fill="#a9acb0"/><rect x="24.30" y="14.90" width="6.4" height="6.4" rx="1.8" fill="#f23c68"/><rect x="7.10" y="23.60" width="6.4" height="6.4" rx="1.8" fill="#9b3fd8"/><rect x="15.70" y="23.60" width="6.4" height="6.4" rx="1.8" fill="#1aa0f0"/><rect x="24.30" y="23.60" width="6.4" height="6.4" rx="1.8" fill="#3ad0a0"/></g><g transform="translate(139.18,718) scale(0.9944)"><rect width="36" height="36" rx="8" fill="url(#gWhite)"/><circle cx="18" cy="17.5" r="15" fill="url(#gSafari)"/><line x1="31.20" y1="17.50" x2="29.60" y2="17.50" stroke="#e8f2ff" stroke-width="0.85"/><line x1="31.09" y1="19.22" x2="30.19" y2="19.11" stroke="#e8f2ff" stroke-width="0.85"/><line x1="30.75" y1="20.92" x2="29.88" y2="20.68" stroke="#e8f2ff" stroke-width="0.85"/><line x1="30.20" y1="22.55" x2="29.36" y2="22.21" stroke="#e8f2ff" stroke-width="0.85"/><line x1="29.43" y1="24.10" x2="28.05" y2="23.30" stroke="#e8f2ff" stroke-width="0.85"/><line x1="28.47" y1="25.54" x2="27.76" y2="24.99" stroke="#e8f2ff" stroke-width="0.85"/><line x1="27.33" y1="26.83" x2="26.70" y2="26.20" stroke="#e8f2ff" stroke-width="0.85"/><line x1="26.04" y1="27.97" x2="25.49" y2="27.26" stroke="#e8f2ff" stroke-width="0.85"/><line x1="24.60" y1="28.93" x2="23.80" y2="27.55" stroke="#e8f2ff" stroke-width="0.85"/><line x1="23.05" y1="29.70" x2="22.71" y2="28.86" stroke="#e8f2ff" stroke-width="0.85"/><line x1="21.42" y1="30.25" x2="21.18" y2="29.38" stroke="#e8f2ff" stroke-width="0.85"/><line x1="19.72" y1="30.59" x2="19.61" y2="29.69" stroke="#e8f2ff" stroke-width="0.85"/><line x1="18.00" y1="30.70" x2="18.00" y2="29.10" stroke="#e8f2ff" stroke-width="0.85"/><line x1="16.28" y1="30.59" x2="16.39" y2="29.69" stroke="#e8f2ff" stroke-width="0.85"/><line x1="14.58" y1="30.25" x2="14.82" y2="29.38" stroke="#e8f2ff" stroke-width="0.85"/><line x1="12.95" y1="29.70" x2="13.29" y2="28.86" stroke="#e8f2ff" stroke-width="0.85"/><line x1="11.40" y1="28.93" x2="12.20" y2="27.55" stroke="#e8f2ff" stroke-width="0.85"/><line x1="9.96" y1="27.97" x2="10.51" y2="27.26" stroke="#e8f2ff" stroke-width="0.85"/><line x1="8.67" y1="26.83" x2="9.30" y2="26.20" stroke="#e8f2ff" stroke-width="0.85"/><line x1="7.53" y1="25.54" x2="8.24" y2="24.99" stroke="#e8f2ff" stroke-width="0.85"/><line x1="6.57" y1="24.10" x2="7.95" y2="23.30" stroke="#e8f2ff" stroke-width="0.85"/><line x1="5.80" y1="22.55" x2="6.64" y2="22.21" stroke="#e8f2ff" stroke-width="0.85"/><line x1="5.25" y1="20.92" x2="6.12" y2="20.68" stroke="#e8f2ff" stroke-width="0.85"/><line x1="4.91" y1="19.22" x2="5.81" y2="19.11" stroke="#e8f2ff" stroke-width="0.85"/><line x1="4.80" y1="17.50" x2="6.40" y2="17.50" stroke="#e8f2ff" stroke-width="0.85"/><line x1="4.91" y1="15.78" x2="5.81" y2="15.89" stroke="#e8f2ff" stroke-width="0.85"/><line x1="5.25" y1="14.08" x2="6.12" y2="14.32" stroke="#e8f2ff" stroke-width="0.85"/><line x1="5.80" y1="12.45" x2="6.64" y2="12.79" stroke="#e8f2ff" stroke-width="0.85"/><line x1="6.57" y1="10.90" x2="7.95" y2="11.70" stroke="#e8f2ff" stroke-width="0.85"/><line x1="7.53" y1="9.46" x2="8.24" y2="10.01" stroke="#e8f2ff" stroke-width="0.85"/><line x1="8.67" y1="8.17" x2="9.30" y2="8.80" stroke="#e8f2ff" stroke-width="0.85"/><line x1="9.96" y1="7.03" x2="10.51" y2="7.74" stroke="#e8f2ff" stroke-width="0.85"/><line x1="11.40" y1="6.07" x2="12.20" y2="7.45" stroke="#e8f2ff" stroke-width="0.85"/><line x1="12.95" y1="5.30" x2="13.29" y2="6.14" stroke="#e8f2ff" stroke-width="0.85"/><line x1="14.58" y1="4.75" x2="14.82" y2="5.62" stroke="#e8f2ff" stroke-width="0.85"/><line x1="16.28" y1="4.41" x2="16.39" y2="5.31" stroke="#e8f2ff" stroke-width="0.85"/><line x1="18.00" y1="4.30" x2="18.00" y2="5.90" stroke="#e8f2ff" stroke-width="0.85"/><line x1="19.72" y1="4.41" x2="19.61" y2="5.31" stroke="#e8f2ff" stroke-width="0.85"/><line x1="21.42" y1="4.75" x2="21.18" y2="5.62" stroke="#e8f2ff" stroke-width="0.85"/><line x1="23.05" y1="5.30" x2="22.71" y2="6.14" stroke="#e8f2ff" stroke-width="0.85"/><line x1="24.60" y1="6.07" x2="23.80" y2="7.45" stroke="#e8f2ff" stroke-width="0.85"/><line x1="26.04" y1="7.03" x2="25.49" y2="7.74" stroke="#e8f2ff" stroke-width="0.85"/><line x1="27.33" y1="8.17" x2="26.70" y2="8.80" stroke="#e8f2ff" stroke-width="0.85"/><line x1="28.47" y1="9.46" x2="27.76" y2="10.01" stroke="#e8f2ff" stroke-width="0.85"/><line x1="29.43" y1="10.90" x2="28.05" y2="11.70" stroke="#e8f2ff" stroke-width="0.85"/><line x1="30.20" y1="12.45" x2="29.36" y2="12.79" stroke="#e8f2ff" stroke-width="0.85"/><line x1="30.75" y1="14.08" x2="29.88" y2="14.32" stroke="#e8f2ff" stroke-width="0.85"/><line x1="31.09" y1="15.78" x2="30.19" y2="15.89" stroke="#e8f2ff" stroke-width="0.85"/><path d="M29 6.8 L19.8 19.3 L16.2 15.7 Z" fill="#f0323a"/><path d="M7 28.2 L16.2 15.7 L19.8 19.3 Z" fill="#fff"/></g><g transform="translate(185.32,718) scale(0.9944)"><rect width="36" height="36" rx="8" fill="url(#gGreen)"/><ellipse cx="18" cy="16.8" rx="12.6" ry="10.4" fill="url(#gBub)"/><path d="M10.5 23 C10 26 8.5 28 7.5 29 C11 28.8 13.5 27.5 15 26 Z" fill="#dff0df"/></g><g transform="translate(231.46,718) scale(0.9944)"><rect width="36" height="36" rx="8" fill="url(#gMail)"/><rect x="6" y="10" width="24" height="16" rx="1.5" fill="url(#gEnv)"/><polyline points="6.5,10.5 18,20 29.5,10.5" fill="none" stroke="#b8c2cc" stroke-width="0.7"/><polyline points="6.5,25.5 14.5,17.5 M29.5,25.5 21.5,17.5" fill="none" stroke="#c8d0d8" stroke-width="0.6"/></g><g transform="translate(277.60,718) scale(0.9944)"><clipPath id="cM"><rect width="36" height="36" rx="8"/></clipPath><g clip-path="url(#cM)"><rect width="36" height="36" fill="#f3eee2"/><path d="M15 0 H36 V26 C32 14 24 6 15 3 Z" fill="#9adf74"/><path d="M22 0 C29 3 34 9 36 15 V9 C33 5 30 2 27 0 Z" fill="#f6f2e6"/><path d="M0 6 C8 8 15 12 20 18 C24 23 27 28 29 36 H34 C32 27 28 20 23 15 C17 9 9 4 0 2 Z" fill="#f6d54a"/><rect x="0" y="12" width="3" height="24" fill="#f5c0cc"/><rect x="13.8" y="22" width="1" height="14" fill="#ffffff"/><rect x="7.2" y="0" width="4.4" height="18" fill="#1e74ee"/><rect x="8.6" y="0" width="1.6" height="17" fill="#8cc4ff"/><circle cx="9.2" cy="20.8" r="5" fill="#fff"/><circle cx="9.2" cy="20.8" r="3.4" fill="#1e74ee"/><path d="M20.7 24.5 h12.3 v4.6 c0 2.8-2.6 4.5-6.150 5.400 c-3.5-0.9-6.150-2.6-6.150-5.400 z" fill="#2a5cc0" stroke="#fff" stroke-width="0.9"/><rect x="21.2" y="24" width="11.3" height="2.6" fill="#e23040"/><text x="26.85" y="31" font-family="Liberation Sans" font-weight="700" font-size="4.2" fill="#fff" text-anchor="middle">280</text></g></g><g transform="translate(323.74,718) scale(0.9944)"><rect width="36" height="36" rx="8" fill="url(#gWhite)"/><ellipse cx="18" cy="10.6" rx="4.9" ry="7.2" fill="#f9a23a" fill-opacity="0.8" transform="rotate(0 18 17.8)"/><ellipse cx="18" cy="10.6" rx="4.9" ry="7.2" fill="#f6d33a" fill-opacity="0.8" transform="rotate(45 18 17.8)"/><ellipse cx="18" cy="10.6" rx="4.9" ry="7.2" fill="#9ad050" fill-opacity="0.8" transform="rotate(90 18 17.8)"/><ellipse cx="18" cy="10.6" rx="4.9" ry="7.2" fill="#42bf8a" fill-opacity="0.8" transform="rotate(135 18 17.8)"/><ellipse cx="18" cy="10.6" rx="4.9" ry="7.2" fill="#3d9ae2" fill-opacity="0.8" transform="rotate(180 18 17.8)"/><ellipse cx="18" cy="10.6" rx="4.9" ry="7.2" fill="#6a78d8" fill-opacity="0.8" transform="rotate(225 18 17.8)"/><ellipse cx="18" cy="10.6" rx="4.9" ry="7.2" fill="#b070cc" fill-opacity="0.8" transform="rotate(270 18 17.8)"/><ellipse cx="18" cy="10.6" rx="4.9" ry="7.2" fill="#f05050" fill-opacity="0.8" transform="rotate(315 18 17.8)"/></g><g transform="translate(369.88,718) scale(0.9944)"><rect width="36" height="36" rx="8" fill="url(#gGreen)"/><rect x="6.5" y="11" width="16" height="14" rx="3" fill="url(#gBub)"/><path d="M23.5 17 L29.5 12 V24 L23.5 19 Z" fill="url(#gBub)"/></g><g transform="translate(416.02,718) scale(0.9944)"><clipPath id="cC"><rect width="36" height="36" rx="8"/></clipPath><g clip-path="url(#cC)"><rect width="36" height="36" fill="url(#gWhite)"/><rect width="36" height="10.8" fill="#f5494a"/></g><text x="18" y="8.4" font-family="Liberation Sans" font-weight="700" font-size="6.6" fill="#fff" text-anchor="middle">JUL</text><text x="18" y="30.5" font-family="Liberation Sans" font-size="20.5" fill="#2a2a2a" text-anchor="middle" letter-spacing="-0.5">27</text></g><g transform="translate(462.16,718) scale(0.9944)"><rect x="33.5" y="12" width="3" height="6" fill="#5ab8e8"/><rect x="33.5" y="18" width="3" height="6" fill="#f0a030"/><rect x="33.5" y="24" width="3" height="5" fill="#6ac060"/><rect width="35" height="36" rx="8" fill="url(#gContacts)"/><circle cx="17.5" cy="17" r="10.3" fill="none" stroke="#8a6630" stroke-width="0.9" opacity="0.7"/><circle cx="17.5" cy="14.3" r="3.4" fill="#8c6a36" opacity="0.8"/><path d="M9.8 23.8 C12 20 23 20 25.2 23.8 C23 26.5 12 26.5 9.8 23.8 Z" fill="#8c6a36" opacity="0.8"/></g><g transform="translate(508.30,718) scale(0.9944)"><rect width="36" height="36" rx="8" fill="url(#gWhite)"/><circle cx="7" cy="9.5" r="2.9" fill="#2b7cf0" opacity="0.85"/><circle cx="7" cy="9.5" r="1" fill="#123" opacity="0.5"/><rect x="12.5" y="8.9" width="17.5" height="1.2" rx="0.6" fill="#d4d4d4"/><circle cx="7" cy="18.3" r="2.9" fill="#f04040" opacity="0.85"/><circle cx="7" cy="18.3" r="1" fill="#123" opacity="0.5"/><rect x="12.5" y="17.7" width="17.5" height="1.2" rx="0.6" fill="#d4d4d4"/><circle cx="7" cy="27.1" r="2.9" fill="#f6a020" opacity="0.85"/><circle cx="7" cy="27.1" r="1" fill="#123" opacity="0.5"/><rect x="12.5" y="26.5" width="17.5" height="1.2" rx="0.6" fill="#d4d4d4"/></g><g transform="translate(554.44,718) scale(0.9944)"><clipPath id="cN"><rect width="36" height="36" rx="8"/></clipPath><g clip-path="url(#cN)"><rect width="36" height="36" fill="url(#gWhite)"/><rect width="36" height="9.5" fill="#fcc82a"/><rect x="0" y="14.5" width="36" height="0.5" fill="#d8d8d8"/><rect x="0" y="19.8" width="36" height="0.5" fill="#d8d8d8"/><rect x="0" y="25.1" width="36" height="0.5" fill="#d8d8d8"/><rect x="0" y="30.4" width="36" height="0.5" fill="#d8d8d8"/></g></g><g transform="translate(600.58,718) scale(0.9944)"><rect width="36" height="36" rx="8" fill="url(#gTV)"/><path d="M12.6 13.2 c-0.9 0-2 0.6-2.6 0.6-0.7 0-1.5-0.6-2.4-0.6-1.7 0-3.3 1.4-3.3 4.1 0 2.7 1.8 6.300 3.3 6.300 0.8 0 1.2-0.5 2.3-0.5 1.1 0 1.300 0.5 2.300 0.5 1.2 0 2.2-1.9 2.6-3.100-1.6-0.7-2-2.800-0.2-4.200-0.7-0.8-1.4-1.100-2-1.100z M10.300 12.900c0.600-0.700 0.900-1.500 0.800-2.300-0.800 0-1.600 0.500-2.100 1.100-0.500 0.600-0.800 1.400-0.700 2.200 0.800 0.100 1.500-0.400 2-1z" fill="#fff"/><text x="16.8" y="23" font-family="Liberation Sans" font-size="13.5" fill="#fff" letter-spacing="-0.2">tv</text></g><g transform="translate(646.72,718) scale(0.9944)"><rect width="36" height="36" rx="8" fill="url(#gMusic)"/><path d="M14 9.8 L26.2 7.3 V23.5" fill="none" stroke="#fff" stroke-width="2.6" stroke-linejoin="round"/><line x1="14" y1="10" x2="14" y2="26" stroke="#fff" stroke-width="2.6"/><ellipse cx="10.5" cy="26.3" rx="4" ry="3.3" fill="#fff"/><ellipse cx="22.8" cy="23.8" rx="4" ry="3.3" fill="#fff"/></g><g transform="translate(692.86,718) scale(0.9944)"><rect width="36" height="36" rx="8" fill="url(#gPod)"/><path d="M10.2 25.3 A11 11 0 1 1 25.8 25.3" fill="none" stroke="#fff" stroke-width="1.6"/><path d="M13 21.6 A6.6 6.6 0 1 1 23 21.6" fill="none" stroke="#fff" stroke-width="1.6"/><circle cx="18" cy="14.6" r="2.9" fill="#fff"/><rect x="15.8" y="19" width="4.4" height="11" rx="2.2" fill="#fff"/></g><g transform="translate(739.00,718) scale(0.9944)"><rect width="36" height="36" rx="8" fill="url(#gApp)"/><g stroke="#fff" stroke-width="2.4" stroke-linecap="round"><line x1="13" y1="7" x2="24.5" y2="27"/><line x1="22" y1="7" x2="8.5" y2="29.5"/><line x1="5.8" y1="22" x2="30" y2="22"/></g></g><g transform="translate(785.14,718) scale(0.9944)"><rect width="36" height="36" rx="8" fill="url(#gSys)"/><circle cx="18" cy="18" r="15" fill="#4a4a4a"/><circle cx="18" cy="18" r="12.5" fill="none" stroke="#9a9a9a" stroke-width="2"/><circle cx="18" cy="18" r="8.8" fill="none" stroke="#8a8a8a" stroke-width="1.8"/><g stroke="#a8a8a8" stroke-width="2.1"><line x1="18" y1="18" x2="18" y2="6.5"/><line x1="18" y1="18" x2="28" y2="23.8"/><line x1="18" y1="18" x2="8" y2="23.8"/></g><circle cx="18" cy="18" r="2.8" fill="#9a9a9a"/></g><circle cx="64.80" cy="760.8" r="2" fill="#2f2f2f"/><circle cx="157.08" cy="760.8" r="2" fill="#2f2f2f"/><circle cx="572.34" cy="760.8" r="2" fill="#2f2f2f"/><circle cx="803.04" cy="760.8" r="2" fill="#2f2f2f"/><line x1="837.6" y1="717" x2="837.6" y2="757.5" stroke="#8a8a8a" stroke-width="1"/><path d="M856 719 H876.5 L884 726.5 V755 H856 Z" fill="#fff"/><path d="M876.5 719 V726.5 H884 Z" fill="#e6e6e6"/><rect x="861.3" y="731.5" width="17.5" height="16.5" rx="1.5" fill="url(#gDisk)"/><rect x="864" y="733" width="12" height="2.3" fill="#3a3a3a" opacity="0.6"/><rect x="896.3" y="722.5" width="41.2" height="27" fill="#fff"/><rect x="910" y="726.3" width="12" height="1" fill="#777"/><circle cx="904" cy="732.5" r="0.9" fill="#60b060"/><rect x="906.5" y="732.0" width="7" height="0.7" fill="#bbb"/><circle cx="904" cy="736.3" r="0.9" fill="#2b7cf0"/><rect x="906.5" y="735.8" width="7" height="0.7" fill="#bbb"/><circle cx="904" cy="740.1" r="0.9" fill="#f0b020"/><rect x="906.5" y="739.6" width="7" height="0.7" fill="#bbb"/><rect x="915.5" y="744" width="2.4" height="0.9" fill="#f0b020"/><rect x="923.6" y="742.4" width="12.4" height="12.3" rx="2.5" fill="#f2f2f2"/><path d="M923.6 745.5 v-0.6 a2.5 2.5 0 0 1 2.5-2.5 h7.4 a2.5 2.5 0 0 1 2.5 2.5 v0.6 z" fill="#fbc52a"/><path d="M948.3 723.5 L951.8 751.5 C952.3 754.3 954 755.3 956.5 755.3 H969.5 C972 755.3 973.7 754.3 974.2 751.5 L977.7 723.5 Z" fill="url(#gTrash)" stroke="#cfcfcf" stroke-width="0.5"/><path d="M951 722 L953 718 L956.5 716.5 L960 719 L963 716 L967 717.5 L970 716.5 L973.5 718.5 L975 722 Z" fill="#3a4a60"/><path d="M953.5 719.5 l3.5 -2.5 l2.5 3.5 z" fill="#2fa08a"/><path d="M962 716.5 l4 1.5 l-2 4 z" fill="#ffffff"/><path d="M966.5 718.5 l3.5 -1.5 l1 4.5 z" fill="#c0603a"/><path d="M957.5 721 l2.5 -3 l2 3z" fill="#e8e4d8"/><path d="M970.5 719 l3 0.5 l0.5 2.5 z" fill="#6aa0c8"/><ellipse cx="963" cy="723.2" rx="14.7" ry="2.3" fill="none" stroke="#f4f4f4" stroke-width="1.6"/><path d="M953 727 C958 729 968 729 973 727" fill="none" stroke="#f6f6f6" stroke-width="1" opacity="0.8"/></svg>
<svg style="left:0;top:0" width="1028" height="26"><rect x="747.5" y="8" width="12.5" height="9.5" rx="2" fill="none" stroke="#2a2a2a" stroke-width="1.4"/><rect x="751" y="11.3" width="12.5" height="9.3" rx="2" fill="#dadada" stroke="#2a2a2a" stroke-width="1.4"/><path d="M784.5 11.6 A11 11 0 0 1 799.5 11.6" fill="none" stroke="#b4b4b4" stroke-width="1.5" stroke-linecap="round"/><path d="M787 14.2 A7.3 7.3 0 0 1 797 14.2" fill="none" stroke="#b4b4b4" stroke-width="1.5" stroke-linecap="round"/><path d="M789.6 16.6 A3.6 3.6 0 0 1 794.4 16.6" fill="none" stroke="#b4b4b4" stroke-width="1.5" stroke-linecap="round"/><circle cx="792" cy="18.2" r="1.1" fill="#b4b4b4"/><circle cx="824" cy="13" r="4.6" fill="none" stroke="#222" stroke-width="1.6"/><line x1="827.4" y1="16.4" x2="830.6" y2="19.6" stroke="#222" stroke-width="1.8" stroke-linecap="round"/><rect x="850.6" y="8.6" width="13.4" height="5" rx="2.5" fill="none" stroke="#333" stroke-width="1.1"/><circle cx="853.3" cy="11.1" r="1.5" fill="#333"/><rect x="850.1" y="15.2" width="14.4" height="5.6" rx="2.8" fill="#333"/><circle cx="861.6" cy="18" r="1.7" fill="#eee"/></svg>
<svg style="left:126px;top:228px" width="14" height="18" viewBox="0 0 14 18"><path d="M1.9 1.7 V13.6 L4.7 10.9 L6.6 15.3 L8.6 14.4 L6.8 10.1 H10.3 Z" fill="#fff" stroke="#fff" stroke-width="2" stroke-linejoin="round" style="filter:drop-shadow(0 0.6px 0.8px rgba(0,0,0,0.35))"/><path d="M1.9 1.7 V13.6 L4.7 10.9 L6.6 15.3 L8.6 14.4 L6.8 10.1 H10.3 Z" fill="#000"/></svg>
</body></html>
